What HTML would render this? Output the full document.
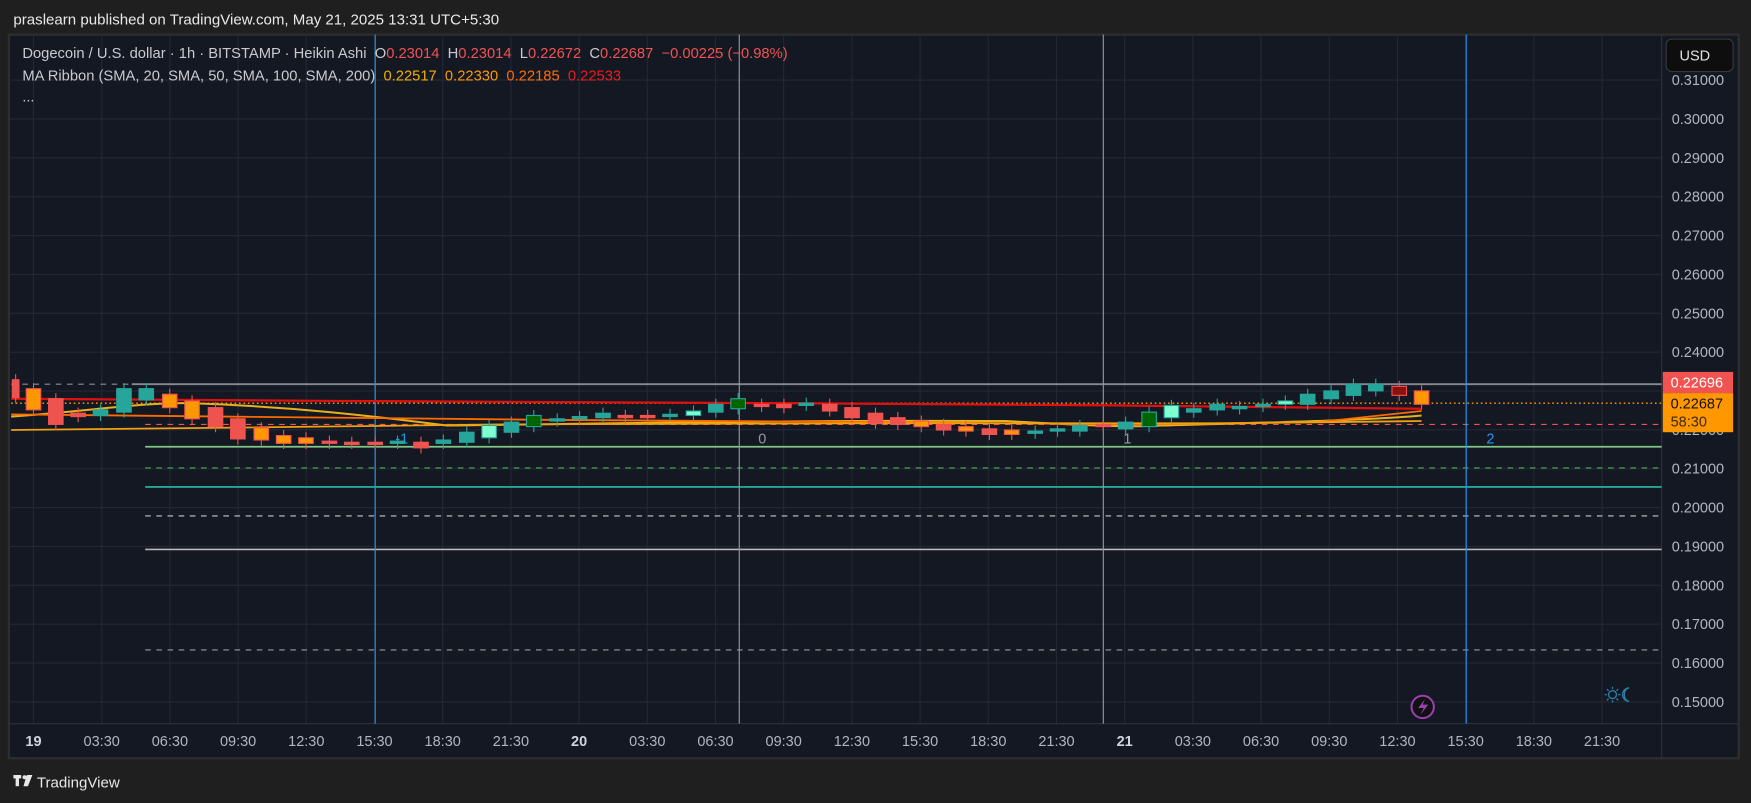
<!DOCTYPE html>
<html><head><meta charset="utf-8"><style>
html,body{margin:0;padding:0;background:#1f1f1f;width:1751px;height:803px;overflow:hidden}
svg{display:block}
text{font-family:"Liberation Sans","DejaVu Sans",sans-serif}
</style></head><body>
<svg id="s" width="1751" height="803" viewBox="0 0 1568 719" xmlns="http://www.w3.org/2000/svg">
<rect x="0" y="0" width="1568" height="719" fill="#1f1f1f"/>
<text x="12" y="22" fill="#e8e8e8" font-size="13.5">praslearn published on TradingView.com, May 21, 2025 13:31 UTC+5:30</text>
<rect x="8" y="31" width="1549" height="648" fill="#141823" stroke="#2e2e2e" stroke-width="2"/>
<g id="grid" stroke="#232836" stroke-width="1"></g>
<line x1="1488" y1="31" x2="1488" y2="679" stroke="#2c303c"/>
<line x1="8" y1="648" x2="1557" y2="648" stroke="#2c303c"/>
<g id="pl" font-size="13" fill="#b2b5be"></g>
<line x1="10" y1="344" x2="118" y2="344" stroke="#8a8d96" stroke-dasharray="5,5"/>
<line x1="118" y1="344" x2="1488" y2="344" stroke="#868993" stroke-width="1.6"/>
<line x1="10" y1="361" x2="1488" y2="361" stroke="#ff9800" stroke-dasharray="1.5,2.5" stroke-width="1.2"/>
<line x1="130" y1="380" x2="1488" y2="380" stroke="#f05350" stroke-dasharray="5,5"/>
<line x1="130" y1="400" x2="1488" y2="400" stroke="#81c784" stroke-width="1.6"/>
<line x1="130" y1="419" x2="1488" y2="419" stroke="#4caf50" stroke-dasharray="5,5"/>
<line x1="130" y1="436" x2="1488" y2="436" stroke="#26a69a" stroke-width="1.6"/>
<line x1="130" y1="462" x2="1488" y2="462" stroke="#c8c8c8" stroke-dasharray="5,5"/>
<line x1="130" y1="492" x2="1488" y2="492" stroke="#b8b8b8" stroke-width="1.4"/>
<line x1="130" y1="582" x2="1488" y2="582" stroke="#9a9a9a" stroke-dasharray="5,5"/>
<line x1="336" y1="31" x2="336" y2="648" stroke="#2196f3"/>
<line x1="662" y1="31" x2="662" y2="648" stroke="#9598a1"/>
<line x1="988" y1="31" x2="988" y2="648" stroke="#9598a1"/>
<line x1="1313" y1="31" x2="1313" y2="648" stroke="#2196f3"/>
<text x="354" y="397" fill="#2196f3" font-size="13">-1</text>
<text x="679" y="397" fill="#9598a1" font-size="13">0</text>
<text x="1006" y="397" fill="#9598a1" font-size="13">1</text>
<text x="1331" y="397" fill="#2196f3" font-size="13">2</text>
<path d="M10 357 L300 359 L700 361 L1000 363 L1273 366" stroke="#e01010" stroke-width="2" fill="none"/>
<path d="M10 373 C80 368 130 360 170 361 C260 364 330 372 400 381 C500 380 700 376 900 377 C960 380 1000 383 1040 381 C1150 378 1230 376 1273 372" stroke="#e8b020" stroke-width="1.8" fill="none"/>
<path d="M10 371 L200 373 L500 376 L800 378 L1000 380 L1180 378 L1273 368" stroke="#ff6a00" stroke-width="1.6" fill="none"/>
<path d="M10 385 L200 383 L450 380 L800 379 L1100 379 L1273 377" stroke="#f0a010" stroke-width="1.6" fill="none"/>
<g id="c"></g>
<text y="52" font-size="13.2" fill="#c8cad0" xml:space="preserve"><tspan x="20">Dogecoin / U.S. dollar · 1h · BITSTAMP · Heikin Ashi  O</tspan><tspan fill="#f05350">0.23014</tspan><tspan>  H</tspan><tspan fill="#f05350">0.23014</tspan><tspan>  L</tspan><tspan fill="#f05350">0.22672</tspan><tspan>  C</tspan><tspan fill="#f05350">0.22687  −0.00225 (−0.98%)</tspan></text>
<text y="72" font-size="13.2" fill="#c8cad0" xml:space="preserve"><tspan x="20">MA Ribbon (SMA, 20, SMA, 50, SMA, 100, SMA, 200)  </tspan><tspan fill="#f0b000">0.22517</tspan><tspan fill="#ff9800">  0.22330</tspan><tspan fill="#ff6d00">  0.22185</tspan><tspan fill="#ee1c1c">  0.22533</tspan></text>
<text x="20" y="91" font-size="13" fill="#c8cad0">...</text>
<rect x="1492" y="35" width="60" height="29" rx="5" fill="#0e0e0e" stroke="#3a3a3a"/>
<text x="1504" y="54" font-size="13" fill="#e0e0e0">USD</text>
<rect x="1489" y="333" width="63" height="19" fill="#f05350"/>
<text x="1496" y="347" font-size="13" fill="#fff">0.22696</text>
<rect x="1489" y="352" width="63" height="35" fill="#ff9800"/>
<text x="1496" y="366" font-size="13" fill="#111">0.22687</text>
<text x="1496" y="382" font-size="13" fill="#3a2a10">58:30</text>
<g id="tl" font-size="13" fill="#b2b5be"></g>
<circle cx="1274" cy="633" r="10" fill="#111" stroke="#9c3fb0" stroke-width="1.8"/>
<path d="M1276 626 L1270 634 L1275 634 L1272 640 L1279 631 L1274 631 Z" fill="#9c3fb0"/>
<g stroke="#2b7fa8" fill="none" stroke-width="1.2"><circle cx="1444" cy="622" r="3.5"/><path d="M1444 615v2M1444 627v2M1437 622h2M1449 622h2M1439 617l1.5 1.5M1447.5 625.5l1.5 1.5M1449 617l-1.5 1.5M1439 627l1.5-1.5"/><path d="M1459 616 A6 6 0 1 0 1459 628 A4.5 6 0 1 1 1459 616Z"/></g>
<g fill="#e8e8e8"><rect x="12" y="694" width="7" height="3"/><rect x="14" y="694" width="3" height="10"/><circle cx="22" cy="696" r="1.8"/><path d="M24 694 L29 694 L25 704 L21 704 Z"/></g>
<text x="33" y="705" font-size="13.5" fill="#e8e8e8">TradingView</text>
</svg>
<script>
var NS="http://www.w3.org/2000/svg";
function el(p,t,a,txt){var e=document.createElementNS(NS,t);for(var k in a)e.setAttribute(k,a[k]);if(txt)e.textContent=txt;document.getElementById(p).appendChild(e);return e;}
for(var i=0;i<=16;i++){var p=0.31-i*0.01;var y=106.5+(0.30-p)*3480;
 el('grid','line',{x1:8,y1:y,x2:1488,y2:y});
 el('pl','text',{x:1497,y:y+4.5},p.toFixed(5));
}
var tls=["19","03:30","06:30","09:30","12:30","15:30","18:30","21:30","20","03:30","06:30","09:30","12:30","15:30","18:30","21:30","21","03:30","06:30","09:30","12:30","15:30","18:30","21:30"];
for(var i=0;i<tls.length;i++){var x=30+i*61.07;el('grid','line',{x1:x,y1:31,x2:x,y2:648});
 var t=el('tl','text',{x:x,y:668,'text-anchor':'middle'},tls[i]);if(tls[i].length<3){t.setAttribute('font-weight','bold');t.setAttribute('fill','#d1d4dc');}}
var C=[[14,340,356,'r'],[30,348,367,'o'],[50,357,380,'r'],[70,370,373,'r'],[90,367,372,'t'],[111,348,369,'t'],[131,348,358,'t'],[152,353,365,'o'],[172,359,375,'o'],[193,365,382,'r'],[213,375,393,'r'],[234,383,394,'o'],[254,390,397,'o'],[274,392,397,'o'],[295,395,397,'r'],[315,396,397,'r'],[336,396,397,'r'],[356,395,397,'t'],[377,396,401,'r'],[397,394,397,'t'],[418,387,396,'t'],[438,381,392,'m'],[458,378,387,'t'],[478,372,382,'g'],[499,375,377,'t'],[519,373,375,'t'],[540,370,374,'t'],[560,372,374,'r'],[580,372,373,'r'],[600,371,372,'t'],[621,368,372,'m'],[641,362,369,'t'],[661,357,366,'g'],[682,362,364,'r'],[702,362,365,'r'],[722,361,363,'t'],[743,362,368,'r'],[763,365,374,'r'],[784,370,379,'r'],[804,374,380,'r'],[825,377,382,'o'],[845,380,385,'r'],[865,382,386,'o'],[886,384,389,'r'],[906,385,389,'o'],[927,386,388,'t'],[947,384,386,'t'],[967,381,386,'t'],[988,380,382,'r'],[1008,378,384,'t'],[1029,369,382,'g'],[1049,363,374,'m'],[1069,366,369,'t'],[1090,362,367,'t'],[1110,364,366,'t'],[1131,362,364,'t'],[1151,359,362,'m'],[1171,353,362,'t'],[1192,350,357,'t'],[1212,344,354,'t'],[1232,344,350,'t'],[1253,346,354,'d'],[1273,350,362,'o']];
var col={r:['#ef5350','#ef5350'],t:['#26a69a','#26a69a'],o:['#ff9800','#ef5350'],m:['#80ffd0','#26a69a'],g:['#006400','#26a69a'],d:['#8b1010','#ef5350']};
C.forEach(function(c){var cc=col[c[3]];var w=c[0]<20?6:13;var x=c[0]<20?c[0]-3:c[0]-6.5;
 el('c','line',{x1:c[0],y1:c[1]-5,x2:c[0],y2:c[2]+5,stroke:cc[1]});
 el('c','rect',{x:x,y:c[1],width:w,height:Math.max(2,c[2]-c[1]),fill:cc[0],stroke:cc[1],'stroke-width':1});});
</script>
</body></html>
